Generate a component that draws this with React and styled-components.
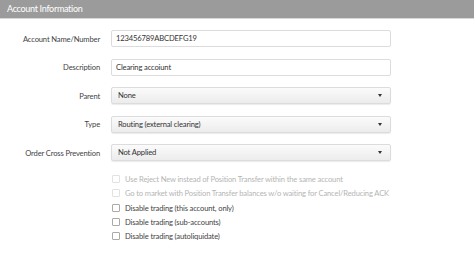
import React from "react";
import styled, { createGlobalStyle } from "styled-components";

const GlobalStyle = createGlobalStyle`
  body {
    margin: 0;
    background: #ffffff;
    font-family: "Lato", "Noto Sans", sans-serif;
  }
`;

const Panel = styled.div`
  width: 474px;
  height: 265px;
  background: #fff;
  overflow: hidden;
`;

const Header = styled.div`
  height: 18px;
  background: #9b9b9b;
  color: #fff;
  font-size: 9px;
  letter-spacing: -0.3px;
  line-height: 18px;
  padding-left: 7px;
  border-bottom: 1px solid #d8d8d8;
`;

const Form = styled.div`
  display: grid;
  grid-template-columns: 100px 280px;
  column-gap: 11px;
  row-gap: 11.5px;
  padding-top: 11px;
  align-items: center;
`;

const Label = styled.div`
  text-align: right;
  font-size: 7.6px;
  letter-spacing: -0.15px;
  color: #444;
`;

const Field = styled.div`
  height: 17px;
  box-sizing: border-box;
  border: 1px solid #dcdcdc;
  border-radius: 2px;
  padding: 0 7px 0 ${(p) => (p.select ? "6px" : "4px")};
  font-size: 7.6px;
  letter-spacing: -0.15px;
  line-height: 15px;
  color: #333;
  display: flex;
  align-items: center;
  justify-content: space-between;
  background: ${(p) =>
    p.select ? "linear-gradient(#fbfbfb, #ececec)" : "#fff"};
  box-shadow: ${(p) => (p.select ? "0 1px 1px rgba(0,0,0,0.08)" : "none")};
`;

const Caret = styled.span`
  width: 0;
  height: 0;
  border-left: 2.5px solid transparent;
  border-right: 2.5px solid transparent;
  border-top: 3px solid #333;
  margin-right: 1px;
`;

const Checks = styled.div`
  display: flex;
  flex-direction: column;
  gap: 4.3px;
  padding: 13px 0 0 112px;
`;

const CheckRow = styled.label`
  display: flex;
  align-items: center;
  gap: 5px;
  font-size: 7.6px;
  letter-spacing: -0.15px;
  height: 10px;
  color: ${(p) => (p.disabled ? "#b5b5b5" : "#444")};
`;

const Box = styled.span`
  width: 6px;
  height: 6px;
  border: 1px solid ${(p) => (p.disabled ? "#e2e2e2" : "#aaa")};
  border-radius: 1px;
  background: #fff;
`;

const fields = [
  { label: "Account Name/Number", value: "123456789ABCDEFG19" },
  { label: "Description", value: "Clearing accoiunt" },
  { label: "Parent", value: "None", select: true },
  { label: "Type", value: "Routing (external clearing)", select: true },
  { label: "Order Cross Prevention", value: "Not Applied", select: true },
];

const checks = [
  { text: "Use Reject New instead of Position Transfer within the same account", disabled: true },
  { text: "Go to market with Position Transfer balances w/o waiting for Cancel/Reducing ACK", disabled: true },
  { text: "Disable trading (this account, only)" },
  { text: "Disable trading (sub-accounts)" },
  { text: "Disable trading (autoliquidate)" },
];

export default function App() {
  return (
    <Panel>
      <GlobalStyle />
      <Header>Account Information</Header>
      <Form>
        {fields.map((f) => (
          <React.Fragment key={f.label}>
            <Label>{f.label}</Label>
            <Field select={f.select}>
              <span>{f.value}</span>
              {f.select && <Caret />}
            </Field>
          </React.Fragment>
        ))}
      </Form>
      <Checks>
        {checks.map((c) => (
          <CheckRow key={c.text} disabled={c.disabled}>
            <Box disabled={c.disabled} />
            {c.text}
          </CheckRow>
        ))}
      </Checks>
    </Panel>
  );
}
